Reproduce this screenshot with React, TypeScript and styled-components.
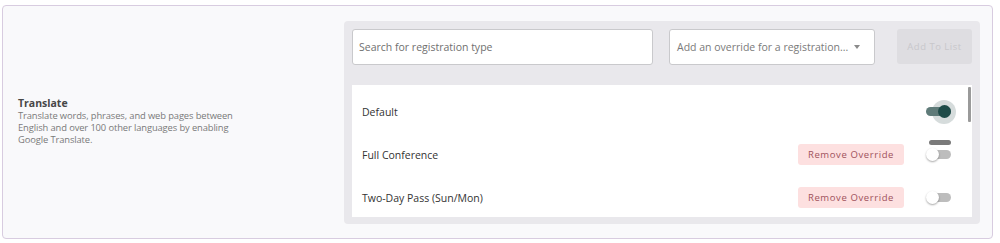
import React from "react";
import styled, { createGlobalStyle } from "styled-components";

const Global = createGlobalStyle`
  html, body { margin: 0; padding: 0; background: #ffffff; }
  body { font-family: "Open Sans", "Liberation Sans", sans-serif; }
  * { box-sizing: border-box; }
`;

const Card = styled.div`
  margin: 5px 7px 4px 2px;
  height: 234px;
  border: 1px solid #d8cce0;
  border-radius: 4px;
  background: #f9f9fb;
  display: flex;
  align-items: stretch;
  padding: 15px 12px 14px 15px;
`;

const Info = styled.div`
  width: 326px;
  flex: none;
  display: flex;
  flex-direction: column;
  justify-content: center;
  padding-bottom: 4px;
`;

const Title = styled.div`
  font-size: 10.5px;
  font-weight: 700;
  color: #474747;
  line-height: 14px;
`;

const Desc = styled.div`
  font-size: 9.4px;
  letter-spacing: -0.12px;
  color: #7a7a7a;
  line-height: 12px;
  white-space: nowrap;
`;

const Panel = styled.div`
  flex: 1;
  background: #e9e8ec;
  border-radius: 4px;
  padding: 8px 8px 7px 8px;
  display: flex;
  flex-direction: column;
  gap: 20px;
`;

const Toolbar = styled.div`
  display: flex;
  align-items: flex-start;
`;

const SearchInput = styled.input`
  width: 301px;
  height: 36px;
  border: 1px solid #c9c9cc;
  border-radius: 3px;
  background: #fff;
  padding: 0 6px;
  font-family: "Open Sans", "Liberation Sans", sans-serif;
  font-size: 10.5px;
  outline: none;
  &::placeholder { color: #6f6f6f; }
`;

const Select = styled.div`
  margin-left: 16px;
  width: 206px;
  height: 36px;
  border: 1px solid #c9c9cc;
  border-radius: 3px;
  background: #fff;
  display: flex;
  align-items: center;
  justify-content: space-between;
  padding: 0 14px 0 7px;
  font-size: 10.5px;
  color: #7a7a7a;
`;

const Caret = styled.span`
  width: 0;
  height: 0;
  border-left: 3.5px solid transparent;
  border-right: 3.5px solid transparent;
  border-top: 4px solid #8a8a8a;
`;

const AddButton = styled.button`
  margin-left: 22px;
  width: 75px;
  height: 35px;
  border: none;
  border-radius: 3px;
  background: #dedde1;
  color: #c8c7cb;
  font-family: "Open Sans", "Liberation Sans", sans-serif;
  font-size: 9.5px;
  letter-spacing: 0.5px;
  padding: 0;
`;

const List = styled.div`
  flex: 1;
  background: #fff;
  position: relative;
  overflow: hidden;
  padding: 5px 21px 0 10px;
`;

const Scrollbar = styled.div`
  position: absolute;
  right: 1px;
  top: 2px;
  width: 3px;
  height: 35px;
  background: #9a9a9a;
  border-radius: 1px;
`;

const Row = styled.div`
  height: 43px;
  display: flex;
  align-items: center;
  font-size: 10.5px;
  color: #333;
`;

const RowLabel = styled.span`
  flex: 1;
`;

const RemoveButton = styled.button`
  width: 106px;
  height: 21px;
  border: none;
  border-radius: 3px;
  background: #fde0e0;
  color: #a0525c;
  font-family: "Open Sans", "Liberation Sans", sans-serif;
  font-size: 9.5px;
  letter-spacing: 0.6px;
  padding: 0;
  margin-right: 22px;
`;

const SwitchWrap = styled.div`
  position: relative;
  width: 25px;
  height: 16px;
  flex: none;
`;

const Track = styled.div<{ $on: boolean }>`
  position: absolute;
  left: ${p => (p.$on ? "0px" : "3px")};
  right: 0;
  top: 3.5px;
  height: 9px;
  border-radius: 5px;
  background: ${p => (p.$on ? "#5f7b79" : "#bdbdbd")};
`;

const Halo = styled.div`
  position: absolute;
  left: 6px;
  top: -4px;
  width: 24px;
  height: 24px;
  border-radius: 50%;
  background: #d6dcdc;
`;

const Thumb = styled.div<{ $on: boolean }>`
  position: absolute;
  top: 1.5px;
  left: ${p => (p.$on ? "11.5px" : "-0.5px")};
  width: 13px;
  height: 13px;
  border-radius: 50%;
  background: ${p => (p.$on ? "#1f4c49" : "#ffffff")};
  box-shadow: ${p => (p.$on ? "none" : "0 1px 2px rgba(0,0,0,0.35)")};
`;

const GhostBar = styled.div`
  position: absolute;
  left: 3px;
  right: 0;
  top: -7px;
  height: 5.5px;
  border-radius: 3px;
  background: #7a7a7a;
`;

function Switch({ on, ghost }: { on: boolean; ghost?: boolean }) {
  return (
    <SwitchWrap>
      {ghost && <GhostBar />}
      {on && <Halo />}
      <Track $on={on} />
      <Thumb $on={on} />
    </SwitchWrap>
  );
}

const rows = [
  { name: "Default", on: true, override: false },
  { name: "Full Conference", on: false, override: true, ghost: true },
  { name: "Two-Day Pass (Sun/Mon)", on: false, override: true },
];

export default function App() {
  return (
    <>
      <Global />
      <Card>
        <Info>
          <Title>Translate</Title>
          <Desc>
            Translate words, phrases, and web pages between
            <br />
            English and over 100 other languages by enabling
            <br />
            Google Translate.
          </Desc>
        </Info>
        <Panel>
          <Toolbar>
            <SearchInput placeholder="Search for registration type" />
            <Select>
              <span>Add an override for a registration...</span>
              <Caret />
            </Select>
            <AddButton>Add To List</AddButton>
          </Toolbar>
          <List>
            <Scrollbar />
            {rows.map(r => (
              <Row key={r.name}>
                <RowLabel>{r.name}</RowLabel>
                {r.override && <RemoveButton>Remove Override</RemoveButton>}
                <Switch on={r.on} ghost={r.ghost} />
              </Row>
            ))}
          </List>
        </Panel>
      </Card>
    </>
  );
}
